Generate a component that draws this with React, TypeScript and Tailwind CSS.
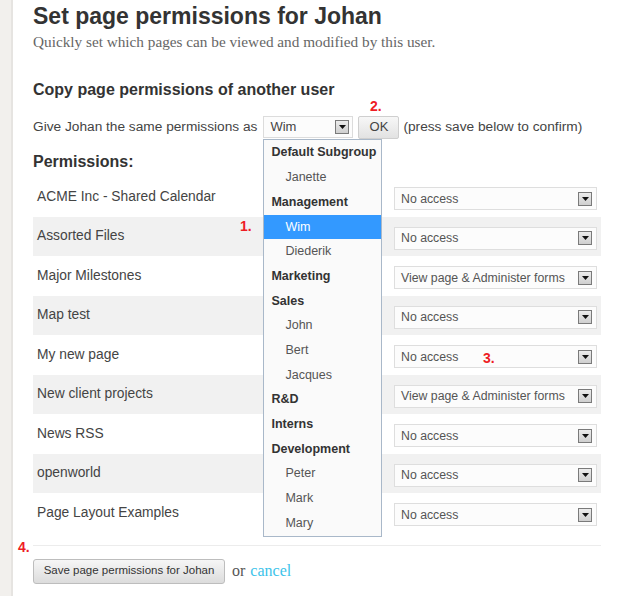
const rows = [
  { name: 'ACME Inc - Shared Calendar', value: 'No access' },
  { name: 'Assorted Files', value: 'No access' },
  { name: 'Major Milestones', value: 'View page & Administer forms' },
  { name: 'Map test', value: 'No access' },
  { name: 'My new page', value: 'No access' },
  { name: 'New client projects', value: 'View page & Administer forms' },
  { name: 'News RSS', value: 'No access' },
  { name: 'openworld', value: 'No access' },
  { name: 'Page Layout Examples', value: 'No access' },
];

const options: { label: string; group?: boolean; active?: boolean }[] = [
  { label: 'Default Subgroup', group: true },
  { label: 'Janette' },
  { label: 'Management', group: true },
  { label: 'Wim', active: true },
  { label: 'Diederik' },
  { label: 'Marketing', group: true },
  { label: 'Sales', group: true },
  { label: 'John' },
  { label: 'Bert' },
  { label: 'Jacques' },
  { label: 'R&D', group: true },
  { label: 'Interns', group: true },
  { label: 'Development', group: true },
  { label: 'Peter' },
  { label: 'Mark' },
  { label: 'Mary' },
];

function Arrow() {
  return (
    <span className="w-[14px] h-[14px] border border-[#7a7a7a] bg-gradient-to-b from-[#ececec] to-[#cfcfcf] flex items-center justify-center shrink-0">
      <svg width="7" height="4" viewBox="0 0 7 4">
        <path d="M0 0h7L3.5 4z" fill="#111" />
      </svg>
    </span>
  );
}

function Marker({ n, className }: { n: string; className: string }) {
  return (
    <span className={`absolute text-[14px] font-bold text-[#ee1c24] leading-none ${className}`}>{n}</span>
  );
}

export default function App() {
  return (
    <div className="min-h-[596px] flex bg-white font-['Liberation_Sans',Arial,sans-serif] relative overflow-hidden">
      <div className="w-[13px] bg-[#f2f0ed] border-r-2 border-[#e6e4e1] shrink-0" />
      <div className="flex-1 pl-[20px] pr-[23px]">
        {/* Header */}
        <h1 className="text-[23px] leading-[32px] font-bold text-[#333]">Set page permissions for Johan</h1>
        <p className="font-['Liberation_Serif',Georgia,serif] text-[15.25px] leading-[20px] text-[#666]">
          Quickly set which pages can be viewed and modified by this user.
        </p>

        {/* Copy from user */}
        <h2 className="mt-[27px] text-[16px] leading-[22px] font-bold text-[#333]">Copy page permissions of another user</h2>
        <div className="mt-[14px] h-[24px] flex items-center text-[13.7px] text-[#444]">
          <span>Give Johan the same permissions as</span>
          <div className="relative ml-[6px]">
            <div className="w-[90px] h-[22px] border border-[#dcdcdc] bg-[#fcfcfc] flex items-center justify-between pl-[6px] pr-[3px] text-[13px] text-[#444]">
              <span>Wim</span>
              <Arrow />
            </div>
            <div className="absolute left-0 top-[23px] w-[119px] border border-[#a9b8c9] bg-[#fafafa] z-10 py-[0.5px]">
              {options.map((o) => (
                <div
                  key={o.label}
                  className={`h-[24.7px] flex items-center whitespace-nowrap text-[12.5px] ${
                    o.group ? 'pl-[7px] font-bold text-[#333]' : 'pl-[21px]'
                  } ${o.active ? 'bg-[#3399ff] text-white' : o.group ? '' : 'text-[#555]'}`}
                >
                  {o.label}
                </div>
              ))}
            </div>
          </div>
          <button className="ml-[5px] w-[41px] h-[23px] border border-[#cfcfcf] rounded-[2px] bg-gradient-to-b from-[#f7f7f7] to-[#e2e2e2] text-[13px] text-[#444]">
            OK
          </button>
          <span className="ml-[4px]">(press save below to confirm)</span>
        </div>

        {/* Permissions */}
        <h2 className="mt-[12px] text-[16px] leading-[22px] font-bold text-[#333]">Permissions:</h2>
        <div className="mt-[4px]">
          {rows.map((r, i) => (
            <div
              key={r.name}
              className={`h-[39.5px] flex items-center justify-between px-[4px] ${i % 2 === 1 ? 'bg-[#f1f1f1]' : ''}`}
            >
              <span className="mt-[1px] text-[13.8px] text-[#444]">{r.name}</span>
              <div className="mt-[4px] w-[203px] h-[23px] border border-[#dedede] bg-[#fcfcfc] flex items-center justify-between pl-[6px] pr-[4px] text-[12.3px] text-[#555]">
                <span>{r.value}</span>
                <Arrow />
              </div>
            </div>
          ))}
        </div>

        {/* Footer */}
        <div className="mt-[12px] border-t border-[#ececec]" />
        <div className="mt-[13px] flex items-center">
          <button className="w-[192px] h-[25px] border border-[#bdbdbd] rounded-[3px] bg-gradient-to-b from-[#f6f6f6] to-[#dcdcdc] text-[11.5px] text-[#333]">
            Save page permissions for Johan
          </button>
          <span className="ml-[7px] font-['Liberation_Serif',Georgia,serif] text-[16px] text-[#555]">or</span>
          <a className="ml-[5px] font-['Liberation_Serif',Georgia,serif] text-[16px] text-[#3cc3ea]">cancel</a>
        </div>
      </div>

      <Marker n="1." className="left-[240px] top-[219px]" />
      <Marker n="2." className="left-[370px] top-[99px]" />
      <Marker n="3." className="left-[483px] top-[351px]" />
      <Marker n="4." className="left-[18px] top-[540px]" />
    </div>
  );
}
